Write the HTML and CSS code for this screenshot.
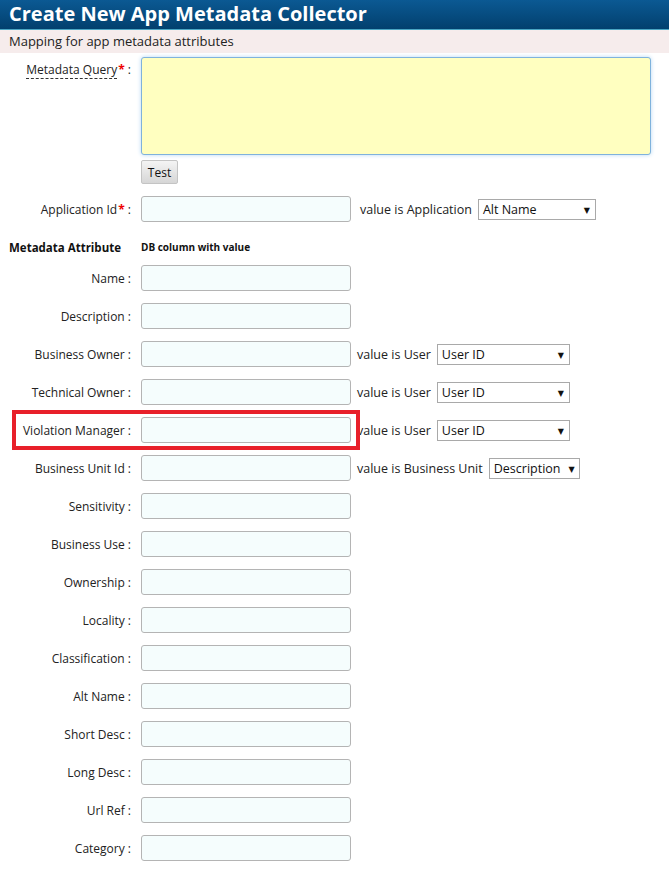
FILE: index.html
```html
<!DOCTYPE html>
<html>
<head>
<meta charset="utf-8">
<link rel="stylesheet" href="styles.css">
</head>
<body>
<div class="page">
  <div class="title-bar"><h1>Create New App Metadata Collector</h1></div>
  <div class="sub-bar">Mapping for app metadata attributes</div>
  <div class="form">
    <div class="row row-query">
      <div class="label"><span class="dotted">Metadata Query</span><span class="req">*</span> :</div>
      <div class="field-col">
        <textarea class="query"></textarea>
        <button class="btn">Test</button>
      </div>
    </div>
    <div class="row row-app">
      <div class="label">Application Id<span class="req">*</span> :</div>
      <input class="text" type="text">
      <span class="value-is">value is Application</span>
      <div class="select sel-app"><span>Alt Name</span><span class="arrow">&#9660;</span></div>
    </div>
    <div class="head-row">
      <div class="head-label">Metadata Attribute</div>
      <div class="head-col">DB column with value</div>
    </div>
    <div class="row"><div class="label">Name :</div><input class="text" type="text"></div>
    <div class="row"><div class="label">Description :</div><input class="text" type="text"></div>
    <div class="row"><div class="label">Business Owner :</div><input class="text" type="text"><span class="value-is">value is User</span><div class="select sel-user"><span>User ID</span><span class="arrow">&#9660;</span></div></div>
    <div class="row"><div class="label">Technical Owner :</div><input class="text" type="text"><span class="value-is">value is User</span><div class="select sel-user"><span>User ID</span><span class="arrow">&#9660;</span></div></div>
    <div class="row highlight-row"><div class="highlight"></div><div class="label">Violation Manager :</div><input class="text" type="text"><span class="value-is">value is User</span><div class="select sel-user"><span>User ID</span><span class="arrow">&#9660;</span></div></div>
    <div class="row"><div class="label">Business Unit Id :</div><input class="text" type="text"><span class="value-is">value is Business Unit</span><div class="select sel-bu"><span>Description</span><span class="arrow">&#9660;</span></div></div>
    <div class="row"><div class="label">Sensitivity :</div><input class="text" type="text"></div>
    <div class="row"><div class="label">Business Use :</div><input class="text" type="text"></div>
    <div class="row"><div class="label">Ownership :</div><input class="text" type="text"></div>
    <div class="row"><div class="label">Locality :</div><input class="text" type="text"></div>
    <div class="row"><div class="label">Classification :</div><input class="text" type="text"></div>
    <div class="row"><div class="label">Alt Name :</div><input class="text" type="text"></div>
    <div class="row"><div class="label">Short Desc :</div><input class="text" type="text"></div>
    <div class="row"><div class="label">Long Desc :</div><input class="text" type="text"></div>
    <div class="row"><div class="label">Url Ref :</div><input class="text" type="text"></div>
    <div class="row"><div class="label">Category :</div><input class="text" type="text"></div>
  </div>
</div>
</body>
</html>
```
FILE: styles.css
```css
html, body { margin: 0; padding: 0; background: #fff; }
body { font-family: "Open Sans", "DejaVu Sans", sans-serif; font-size: 12px; color: #222; }
.page { width: 669px; }
.title-bar {
  height: 29px;
  background: linear-gradient(#0b5993, #02406e);
  border-bottom: 1px solid #4aa6c4;
  box-sizing: content-box;
}
.title-bar h1 {
  margin: 0; padding: 0 0 0 9px;
  font-size: 20px; font-weight: bold; color: #fff; line-height: 28px;
}
.sub-bar {
  height: 23px; line-height: 23px; background: #f6ecec;
  padding-left: 9px; font-size: 13px; color: #222;
}
.form { padding-top: 4px; }
.row { display: flex; align-items: center; height: 26px; margin-bottom: 12px; position: relative; }
.label {
  width: 141px; box-sizing: border-box; padding-right: 10px; text-align: right;
  white-space: nowrap; font-size: 12px;
}
.dotted { border-bottom: 1px dashed #333; }
.req { color: #e00; font-weight: bold; margin-left: 1px; }
.row-query { height: auto; align-items: flex-start; margin-bottom: 12px; }
.row-query .label { padding-top: 4px; }
.field-col { display: flex; flex-direction: column; align-items: flex-start; }
.query {
  width: 510px; height: 98px; box-sizing: border-box; margin: 0;
  background: #ffffc0; border: 1px solid #7fb2dc; border-radius: 3px;
  box-shadow: 0 0 4px #b6d8f4; resize: none; display: block;
}
.btn {
  margin-top: 5px; height: 24px; width: 37px; padding: 0;
  font-family: inherit; font-size: 12px; color: #111;
  background: linear-gradient(#f4f4f4, #d6d6d6);
  border: 1px solid #c4c4c4; border-radius: 2px;
}
.text {
  width: 210px; height: 26px; box-sizing: border-box; margin: 0;
  background: #f5fdfd; border: 1px solid #b4b4b4; border-radius: 3px;
  font-family: inherit; font-size: 12px;
}
.value-is { margin-left: 6px; font-size: 12.5px; white-space: nowrap; }
.row-app .value-is { margin-left: 9px; }
.select {
  height: 21px; box-sizing: border-box; border: 1px solid #a9a9a9; background: #fff;
  display: flex; align-items: center; justify-content: space-between;
  padding: 0 5px 0 4px; font-size: 12.5px; color: #111; margin-left: 6px;
}
.arrow { font-size: 8px; color: #111; }
.sel-app { width: 118px; margin-left: 6px; }
.sel-user { width: 133px; }
.sel-bu { width: 91px; padding-right: 4px; }
.head-row { display: flex; align-items: center; height: 20px; margin: 15px 0 8px; }
.head-label { width: 141px; box-sizing: border-box; padding-left: 9px; font-weight: bold; font-size: 11.5px; color: #111; }
.head-col { font-weight: bold; font-size: 10px; color: #111; }
.highlight {
  position: absolute; left: 12px; top: -7px; width: 348px; height: 40px;
  box-sizing: border-box; border: 4px solid #e8202a; pointer-events: none;
}
```
